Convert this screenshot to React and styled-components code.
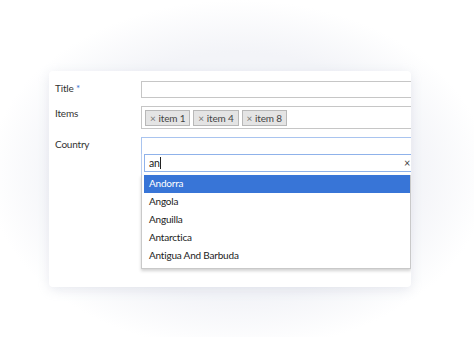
import React from "react";
import styled, { createGlobalStyle } from "styled-components";

const GlobalStyle = createGlobalStyle`
  html, body {
    margin: 0;
    padding: 0;
    background: #ffffff;
  }
  body {
    font-family: Lato, "Open Sans", sans-serif;
    color: #333;
  }
`;

const COUNTRIES = ["Andorra", "Angola", "Anguilla", "Antarctica", "Antigua And Barbuda"];
const ITEMS = ["item 1", "item 4", "item 8"];

const App = () => {
  return (
    <Page>
      <GlobalStyle />
      <Card>
        <Label>
          Title <Required>*</Required>
        </Label>
        <TextBox />

        <Label>Items</Label>
        <TagBox>
          {ITEMS.map((item) => (
            <Tag key={item}>
              <TagX>×</TagX>
              {item}
            </Tag>
          ))}
        </TagBox>

        <Label>Country</Label>
        <Select>
          <Selection />
          <Dropdown>
            <SearchWrap>
              <Search>
                an<Caret />
                <Clear>×</Clear>
              </Search>
            </SearchWrap>
            <List>
              {COUNTRIES.map((name, i) => (
                <Option key={name} $active={i === 0}>
                  {name}
                </Option>
              ))}
            </List>
          </Dropdown>
        </Select>
      </Card>
    </Page>
  );
};

const Page = styled.div`
  width: 474px;
  height: 337px;
  box-sizing: border-box;
  padding: 71px 0 0 49px;
  overflow: hidden;
  background:
    radial-gradient(ellipse 250px 175px at 238px 175px, #f2f3f8 0%, #f3f4f8 70%, rgba(255, 255, 255, 0) 100%),
    #ffffff;
`;

const Card = styled.div`
  width: 362px;
  height: 216px;
  box-sizing: border-box;
  padding: 10px 0 0 6px;
  background: #ffffff;
  border-radius: 4px;
  box-shadow: 0 3px 12px rgba(150, 160, 185, 0.2);
  overflow: hidden;
  display: grid;
  grid-template-columns: 86px 300px;
  grid-template-rows: 17px 23px auto;
  row-gap: 8px;
  align-items: start;
  font-size: 10px;
  letter-spacing: -0.2px;
`;

const Label = styled.div`
  line-height: 14px;
  color: #333;
`;

const Required = styled.span`
  color: #3a6fd0;
`;

const TextBox = styled.div`
  height: 17px;
  box-sizing: border-box;
  border: 1px solid #c6c6c6;
  background: #fff;
`;

const TagBox = styled.div`
  height: 23px;
  box-sizing: border-box;
  border: 1px solid #c6c6c6;
  display: flex;
  align-items: center;
  gap: 3px;
  padding: 0 3px;
`;

const Tag = styled.div`
  height: 16px;
  box-sizing: border-box;
  padding: 0 4px;
  border: 1px solid #b8b8b8;
  background: #e4e4e4;
  line-height: 14px;
  color: #444;
  display: flex;
  align-items: center;
  gap: 3px;
`;

const TagX = styled.span`
  color: #777;
  font-size: 10px;
`;

const Select = styled.div`
  display: flex;
  flex-direction: column;
`;

const Selection = styled.div`
  height: 16px;
  border-top: 1px solid #a9c4ef;
  border-left: 1px solid #a9c4ef;
`;

const Dropdown = styled.div`
  border-left: 1px solid #b9cdef;
`;

const SearchWrap = styled.div`
  padding: 0 0 3px 2px;
`;

const Search = styled.div`
  position: relative;
  height: 18px;
  box-sizing: border-box;
  border: 1px solid #8fb2ea;
  padding-left: 4px;
  font-size: 10.5px;
  line-height: 16px;
  color: #222;
`;

const Caret = styled.span`
  display: inline-block;
  width: 1px;
  height: 12px;
  background: #222;
  vertical-align: -2px;
`;

const Clear = styled.span`
  position: absolute;
  left: 259px;
  top: 0;
  font-size: 11px;
  line-height: 16px;
  color: #444;
`;

const List = styled.div`
  margin-left: -1px;
  margin-right: 30px;
  border: 1px solid #c9c9c9;
  border-top: none;
  box-shadow: 0 2px 3px rgba(0, 0, 0, 0.18);
  background: #fff;
  padding: 0 0 3px 0;
`;

const Option = styled.div`
  height: 18px;
  margin-left: 2px;
  padding-left: 5px;
  line-height: 17px;
  color: ${(p) => (p.$active ? "#fff" : "#222")};
  background: ${(p) => (p.$active ? "#3875d7" : "transparent")};
`;

export default App;
